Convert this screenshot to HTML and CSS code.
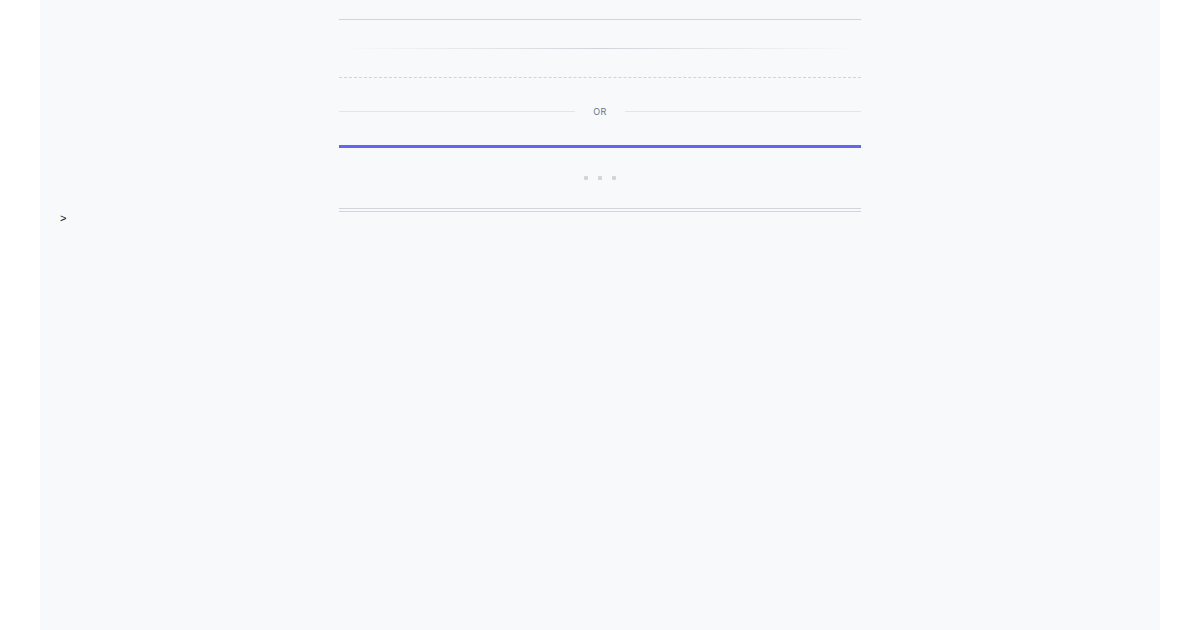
FILE: index.html
```html
<!DOCTYPE html>
<html lang="en">
<head>
<meta charset="utf-8">
<title>Dividers</title>
<link rel="stylesheet" href="styles.css">
</head>
<body>
<div class="page">
  <div class="stack">
    <div class="sep sep-solid"></div>
    <div class="sep sep-fade"></div>
    <div class="sep sep-dashed"></div>
    <div class="sep-or">
      <span class="or-line"></span>
      <span class="or-text">OR</span>
      <span class="or-line"></span>
    </div>
    <div class="sep sep-accent"></div>
    <div class="sep-dots">
      <span class="dot"></span>
      <span class="dot"></span>
      <span class="dot"></span>
    </div>
    <div class="sep sep-double"></div>
  </div>
  <div class="stray">&gt;</div>
</div>
</body>
</html>
```

FILE: styles.css
```css
html, body {
  margin: 0;
  padding: 0;
  background: #ffffff;
}

.page {
  margin: 0 40px;
  padding: 0 20px;
  min-height: 630px;
  background: #f8f9fb;
  font-family: "Inter", "Liberation Sans", sans-serif;
  box-sizing: border-box;
}

.stack {
  width: 522px;
  margin: 0 auto;
  display: flex;
  flex-direction: column;
}

.sep-solid {
  margin-top: 19px;
  height: 1px;
  background: #d1d5db;
}

.sep-fade {
  margin-top: 28px;
  height: 1px;
  background: linear-gradient(90deg, rgba(209, 213, 219, 0), #d1d5db 50%, rgba(209, 213, 219, 0));
}

.sep-dashed {
  margin-top: 28px;
  height: 0;
  border-top: 1px dashed #cfd3da;
}

.sep-or {
  margin-top: 26px;
  height: 15px;
  display: flex;
  align-items: center;
  gap: 18px;
}

.or-line {
  flex: 1;
  height: 1px;
  background: #e2e5ea;
}

.or-text {
  font-size: 9px;
  line-height: 15px;
  color: #6b7280;
  letter-spacing: 0.3px;
}

.sep-accent {
  margin-top: 26px;
  height: 3px;
  background: #6366f1;
}

.sep-dots {
  margin-top: 28px;
  height: 4px;
  display: flex;
  justify-content: center;
  gap: 10px;
}

.dot {
  width: 4px;
  height: 4px;
  border-radius: 1px;
  background: #d1d5db;
}

.sep-double {
  margin-top: 28px;
  height: 0;
  border-top: 4px double #d1d5db;
}

.stray {
  font-family: "Liberation Sans", sans-serif;
  font-size: 11px;
  line-height: 12px;
  color: #111111;
}
```
